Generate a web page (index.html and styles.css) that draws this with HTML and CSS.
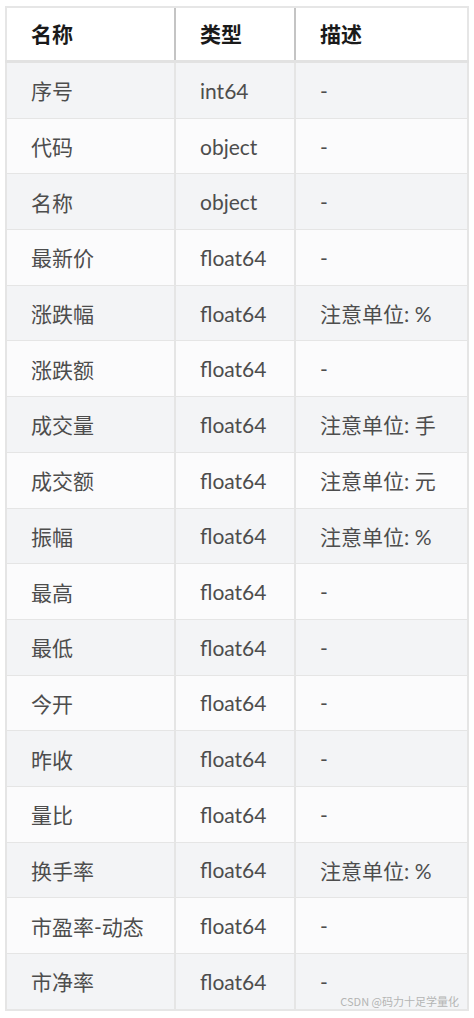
FILE: index.html
```html
<!DOCTYPE html>
<html lang="zh">
<head>
<meta charset="utf-8">
<title>字段说明</title>
<link rel="stylesheet" href="styles.css">
</head>
<body>
<div class="wrap">
<table class="fields">
  <colgroup>
    <col class="c1"><col class="c2"><col class="c3">
  </colgroup>
  <thead>
    <tr><th>名称</th><th>类型</th><th>描述</th></tr>
  </thead>
  <tbody>
    <tr><td>序号</td><td>int64</td><td>-</td></tr>
    <tr><td>代码</td><td>object</td><td>-</td></tr>
    <tr><td>名称</td><td>object</td><td>-</td></tr>
    <tr><td>最新价</td><td>float64</td><td>-</td></tr>
    <tr><td>涨跌幅</td><td>float64</td><td>注意单位: %</td></tr>
    <tr><td>涨跌额</td><td>float64</td><td>-</td></tr>
    <tr><td>成交量</td><td>float64</td><td>注意单位: 手</td></tr>
    <tr><td>成交额</td><td>float64</td><td>注意单位: 元</td></tr>
    <tr><td>振幅</td><td>float64</td><td>注意单位: %</td></tr>
    <tr><td>最高</td><td>float64</td><td>-</td></tr>
    <tr><td>最低</td><td>float64</td><td>-</td></tr>
    <tr><td>今开</td><td>float64</td><td>-</td></tr>
    <tr><td>昨收</td><td>float64</td><td>-</td></tr>
    <tr><td>量比</td><td>float64</td><td>-</td></tr>
    <tr><td>换手率</td><td>float64</td><td>注意单位: %</td></tr>
    <tr><td>市盈率-动态</td><td>float64</td><td>-</td></tr>
    <tr><td>市净率</td><td>float64</td><td>-</td></tr>
  </tbody>
</table>
<span class="watermark">CSDN @码力十足学量化</span>
</div>
</body>
</html>
```

FILE: styles.css
```css
html, body {
  margin: 0;
  padding: 0;
  background: #ffffff;
}

body {
  font-family: Lato, "Noto Sans CJK SC", sans-serif;
}

.wrap {
  position: relative;
  width: 462px;
  margin: 6px 0 0 5px;
}

.fields {
  width: 462px;
  border-collapse: collapse;
  table-layout: fixed;
  font-size: 21px;
}

.c1 { width: 169px; }
.c2 { width: 120px; }
.c3 { width: 173px; }

.fields th,
.fields td {
  text-align: left;
  padding: 0 0 0 24px;
  white-space: nowrap;
  overflow: hidden;
}

.fields th {
  height: 50px;
  padding-bottom: 2px;
  font-weight: 700;
  color: #1a1a1a;
  background: #ffffff;
  border-top: 2px solid #e6e6e6;
  border-left: 2px solid #c4c4c4;
  border-bottom: 3px solid #e2e2e2;
}

.fields th:first-child {
  border-left: 2px solid #e6e6e6;
}

.fields th:last-child {
  border-right: 2px solid #e6e6e6;
}

.fields td {
  height: 54.7px;
  color: #4d4d4d;
  border: 1px solid #e5e5e5;
  border-left-width: 2px;
  border-right-width: 2px;
}

.fields tbody tr:nth-child(odd) td {
  background: #f3f4f6;
}

.fields tbody tr:nth-child(even) td {
  background: #fbfbfc;
}

.fields tbody tr:last-child td {
  border-bottom: 2px solid #e6e6e6;
}

.watermark {
  position: absolute;
  right: 8px;
  bottom: 2px;
  font-family: "Noto Sans CJK SC", sans-serif;
  font-size: 11px;
  color: #b4b4b4;
}
```
